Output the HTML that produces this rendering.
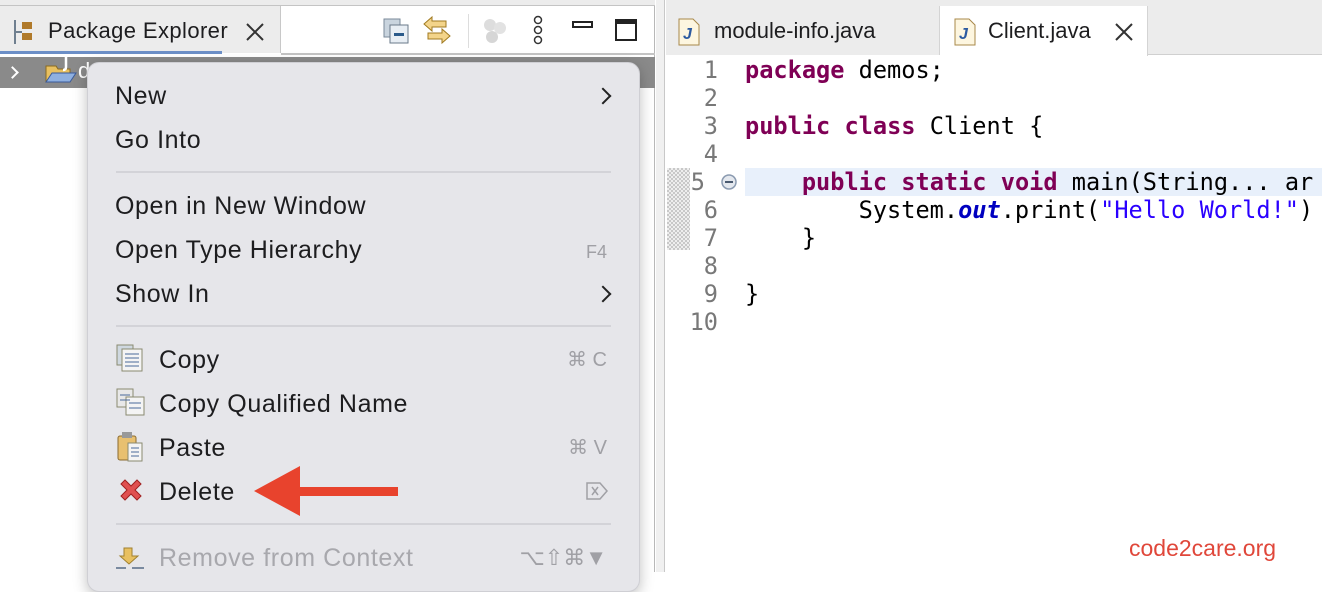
<!DOCTYPE html>
<html><head><meta charset="utf-8"><style>
*{margin:0;padding:0;box-sizing:border-box}
body{width:1322px;height:572px;overflow:hidden;background:#fff;font-family:"Liberation Sans",Helvetica,sans-serif;position:relative}
.abs{position:absolute}
.mono{font-family:"DejaVu Sans Mono","Liberation Mono",monospace;font-size:23.6px}
.kw{color:#7f0055;font-weight:bold}
.mi{position:absolute;left:115px;font-size:25px;letter-spacing:0.6px;color:#1d1d1f;line-height:28px}
.sc{position:absolute;right:32px;font-size:20px;color:#a0a0a5;line-height:28px}
.chev{position:absolute;right:30px;width:12px;height:12px;border-right:2.5px solid #222;border-top:2.5px solid #222;transform:rotate(45deg)}
.sep{position:absolute;left:28px;right:28px;height:2px;background:#d3d3d8}
.ln{position:absolute;right:604px;color:#787878}
</style></head><body>
<div class="abs" style="left:0;top:0;width:655px;height:572px;background:#fff;border-right:1px solid #b8b8b8"></div>
<div class="abs" style="left:0;top:0;width:655px;height:6px;background:#ececec;border-bottom:1px solid #c4c4c4"></div>
<div class="abs" style="left:0;top:6px;width:281px;height:47px;background:#ececec;border-right:1px solid #c8c8c8"></div>
<div class="abs" style="left:0;top:51px;width:222px;height:3px;background:#6c8fc7"></div>
<div class="abs" style="left:281px;top:53px;width:374px;height:2px;background:#c4c4c4"></div>
<svg class="abs" style="left:14px;top:20px" width="24" height="26"><rect x="0" y="0" width="2" height="24" fill="#6f7f8f"/><rect x="2" y="11" width="6" height="2" fill="#6f7f8f"/><rect x="8" y="2" width="10" height="7" fill="#b07a2a"/><rect x="8" y="13" width="10" height="7" fill="#b07a2a"/></svg>
<div class="abs" style="left:48px;top:18px;font-size:22px;letter-spacing:0.4px;color:#1d1d1f">Package Explorer</div>
<svg class="abs" style="left:245px;top:22px" width="20" height="20"><path d="M2 2 L18 18 M18 2 L2 18" stroke="#333" stroke-width="2"/></svg>
<svg class="abs" style="left:382px;top:17px" width="30" height="30"><rect x="2" y="2" width="16" height="18" fill="#c9d4de" stroke="#7a8a9a"/><rect x="8" y="8" width="18" height="18" fill="#e8eef4" stroke="#6a7a8a"/><rect x="12" y="16" width="10" height="3" fill="#2a5a8a"/></svg>
<svg class="abs" style="left:420px;top:14px" width="34" height="34"><path d="M4 10 L12 3 L12 7 L26 7 L26 13 L12 13 L12 17 Z" fill="#f3d48a" stroke="#a07a20"/><path d="M30 22 L22 15 L22 19 L8 19 L8 25 L22 25 L22 29 Z" fill="#f3d48a" stroke="#a07a20"/></svg>
<div class="abs" style="left:468px;top:14px;width:1px;height:34px;background:#ddd"></div>
<svg class="abs" style="left:480px;top:16px" width="30" height="30"><circle cx="10" cy="9" r="6" fill="#ddd"/><circle cx="20" cy="12" r="6" fill="#e2e2e2"/><circle cx="12" cy="21" r="6" fill="#d6d6d6"/></svg>
<svg class="abs" style="left:531px;top:15px" width="14" height="32"><circle cx="7" cy="5" r="3.5" fill="none" stroke="#333" stroke-width="1.5"/><circle cx="7" cy="15" r="3.5" fill="none" stroke="#333" stroke-width="1.5"/><circle cx="7" cy="25" r="3.5" fill="none" stroke="#333" stroke-width="1.5"/></svg>
<div class="abs" style="left:572px;top:21px;width:21px;height:7px;border:2px solid #222"></div>
<div class="abs" style="left:615px;top:19px;width:22px;height:22px;border:2px solid #222;border-top-width:5px"></div>
<div class="abs" style="left:0;top:57px;width:655px;height:31px;background:#8a8a8a"></div>
<div class="abs" style="left:8px;top:68px;width:9px;height:9px;border-right:2px solid #fff;border-top:2px solid #fff;transform:rotate(45deg)"></div>
<svg class="abs" style="left:44px;top:56px" width="34" height="30"><path d="M2 10 L12 10 L14 13 L26 13 L26 26 L2 26 Z" fill="#e8c060" stroke="#8a6a20"/><path d="M2 26 L8 17 L32 17 L26 26 Z" fill="#8fb0e0" stroke="#3a5a9a"/><path d="M22 1 L22 11 Q22 14 19 14" fill="none" stroke="#fff" stroke-width="2.5"/></svg>
<div class="abs" style="left:78px;top:58px;font-size:22px;color:#fff">d</div>
<div class="abs" style="left:656px;top:0;width:9px;height:572px;background:#f0f0f0;border-right:1px solid #c8c8c8"></div>
<div class="abs" style="left:666px;top:0;width:656px;height:6px;background:#ececec"></div>
<div class="abs" style="left:666px;top:6px;width:656px;height:49px;background:#ececec;border-bottom:1px solid #d0d0d0"></div>
<div class="abs" style="left:666px;top:6px;width:274px;height:49px;background:#ececec;border-right:1px solid #d4d4d4"></div>
<div class="abs" style="left:940px;top:6px;width:208px;height:50px;background:#fff;border-right:1px solid #d4d4d4"></div>
<svg class="abs" style="left:678px;top:18px" width="22" height="28"><path d="M1 1 L15 1 L21 7 L21 27 L1 27 Z" fill="#fdf6e0" stroke="#a8884a"/><text x="5" y="21" font-family="Liberation Sans" font-weight="bold" font-style="italic" font-size="16" fill="#2c5aa0">J</text></svg>
<div class="abs" style="left:714px;top:18px;font-size:22px;color:#1d1d1f">module-info.java</div>
<svg class="abs" style="left:954px;top:18px" width="22" height="28"><path d="M1 1 L15 1 L21 7 L21 27 L1 27 Z" fill="#fdf6e0" stroke="#a8884a"/><text x="5" y="21" font-family="Liberation Sans" font-weight="bold" font-style="italic" font-size="16" fill="#2c5aa0">J</text></svg>
<div class="abs" style="left:988px;top:18px;font-size:22px;color:#1d1d1f">Client.java</div>
<svg class="abs" style="left:1114px;top:22px" width="20" height="20"><path d="M2 2 L18 18 M18 2 L2 18" stroke="#333" stroke-width="2"/></svg>
<div class="abs" style="left:667px;top:168px;width:23px;height:82px;background:repeating-conic-gradient(#c8c8c8 0 25%,#eee 0 50%) 0 0/4px 4px"></div>
<div class="abs" style="left:745px;top:168px;width:577px;height:28px;background:#e8f0fb"></div>
<svg class="abs" style="left:720px;top:173px" width="18" height="18"><circle cx="9" cy="9" r="7" fill="#e4e8ee" stroke="#8a9ab0" stroke-width="1.5"/><rect x="5" y="8" width="8" height="2" fill="#4a5a70"/></svg>
<div class="mono abs" style="left:0;top:56px;width:1322px;line-height:28px">
<div class="ln" style="top:0">1</div><div class="ln" style="top:28px">2</div><div class="ln" style="top:56px">3</div><div class="ln" style="top:84px">4</div><div class="ln" style="top:112px;right:617px">5</div><div class="ln" style="top:140px">6</div><div class="ln" style="top:168px">7</div><div class="ln" style="top:196px">8</div><div class="ln" style="top:224px">9</div><div class="ln" style="top:252px">10</div>
<div class="abs" style="left:745px;top:0;white-space:pre"><span class="kw">package</span> demos;</div>
<div class="abs" style="left:745px;top:56px;white-space:pre"><span class="kw">public</span> <span class="kw">class</span> Client {</div>
<div class="abs" style="left:745px;top:112px;white-space:pre">    <span class="kw">public</span> <span class="kw">static</span> <span class="kw">void</span> main(String... ar</div>
<div class="abs" style="left:745px;top:140px;white-space:pre">        System.<b style="color:#0000c0;font-style:italic">out</b>.print(<span style="color:#2a00ff">"Hello World!"</span>)</div>
<div class="abs" style="left:745px;top:168px;white-space:pre">    }</div>
<div class="abs" style="left:745px;top:224px;white-space:pre">}</div>
</div>
<div class="abs" style="left:1129px;top:535px;font-size:23px;color:#e0473a">code2care.org</div>
<div class="abs" style="left:87px;top:62px;width:553px;height:530px;background:#e6e6ea;border-radius:12px;border:1px solid #cfcfd4;box-shadow:0 4px 14px rgba(0,0,0,.25)">
<div class="mi" style="top:19px;left:27px">New</div><div class="chev" style="top:27px"></div>
<div class="mi" style="top:63px;left:27px">Go Into</div>
<div class="sep" style="top:108px"></div>
<div class="mi" style="top:129px;left:27px">Open in New Window</div>
<div class="mi" style="top:173px;left:27px">Open Type Hierarchy</div><div class="sc" style="top:175px;font-size:18px">F4</div>
<div class="mi" style="top:217px;left:27px">Show In</div><div class="chev" style="top:225px"></div>
<div class="sep" style="top:262px"></div>
<svg class="abs" style="left:28px;top:281px" width="30" height="30"><rect x="1" y="1" width="16" height="20" fill="#cfd8e0" stroke="#8a8a70"/><rect x="6" y="5" width="20" height="22" fill="#f4f4f4" stroke="#8a8a70"/><g stroke="#4a6a9a"><line x1="9" y1="10" x2="23" y2="10"/><line x1="9" y1="14" x2="23" y2="14"/><line x1="9" y1="18" x2="23" y2="18"/><line x1="9" y1="22" x2="23" y2="22"/></g></svg>
<div class="mi" style="top:283px;left:71px">Copy</div><div class="sc" style="top:283px">⌘ C</div>
<svg class="abs" style="left:28px;top:325px" width="30" height="30"><rect x="1" y="1" width="16" height="18" fill="#e8e8e8" stroke="#8a8a70"/><rect x="10" y="9" width="18" height="18" fill="#f4f4f4" stroke="#8a8a70"/><g stroke="#4a6a9a"><line x1="4" y1="7" x2="14" y2="7"/><line x1="4" y1="12" x2="14" y2="12"/><line x1="13" y1="15" x2="25" y2="15"/><line x1="13" y1="20" x2="25" y2="20"/></g></svg>
<div class="mi" style="top:327px;left:71px">Copy Qualified Name</div>
<svg class="abs" style="left:28px;top:368px" width="30" height="32"><rect x="2" y="5" width="18" height="24" rx="2" fill="#e8c070" stroke="#8a6a30"/><rect x="6" y="1" width="10" height="6" fill="#999"/><rect x="12" y="12" width="14" height="18" fill="#f4f4f4" stroke="#8a8a70"/><g stroke="#4a6a9a"><line x1="15" y1="17" x2="23" y2="17"/><line x1="15" y1="21" x2="23" y2="21"/><line x1="15" y1="25" x2="23" y2="25"/></g></svg>
<div class="mi" style="top:371px;left:71px">Paste</div><div class="sc" style="top:371px">⌘ V</div>
<svg class="abs" style="left:29px;top:413px" width="28" height="28"><path d="M4 8 L8 4 L14 10 L20 4 L24 8 L18 14 L24 20 L20 24 L14 18 L8 24 L4 20 L10 14 Z" fill="#e05050" stroke="#a02020"/></svg>
<div class="mi" style="top:415px;left:71px">Delete</div>
<svg class="abs" style="left:497px;top:418px" width="24" height="20"><path d="M2 2 L15 2 L22 10 L15 18 L2 18 Z" fill="none" stroke="#a0a0a5" stroke-width="1.5"/><path d="M7 6 L13 14 M13 6 L7 14" stroke="#a0a0a5" stroke-width="1.5"/></svg>
<div class="sep" style="top:460px"></div>
<svg class="abs" style="left:28px;top:481px" width="30" height="26"><path d="M8 4 L16 4 L16 12 L22 12 L13 20 L4 12 L8 12 Z" fill="#e8c060" stroke="#a08030"/><line x1="0" y1="24" x2="10" y2="24" stroke="#7a8aa0" stroke-width="2"/><line x1="16" y1="24" x2="28" y2="24" stroke="#7a8aa0" stroke-width="2"/></svg>
<div class="mi" style="top:481px;left:71px;color:#a8a8ad">Remove from Context</div><div class="sc" style="top:481px;font-size:22px">⌥⇧⌘▼</div>
</div>
<svg class="abs" style="left:250px;top:463px" width="150" height="56"><path d="M4 28 L50 3 L50 24 L148 24 L148 33 L50 33 L50 53 Z" fill="#e8432d"/></svg>
</body></html>
